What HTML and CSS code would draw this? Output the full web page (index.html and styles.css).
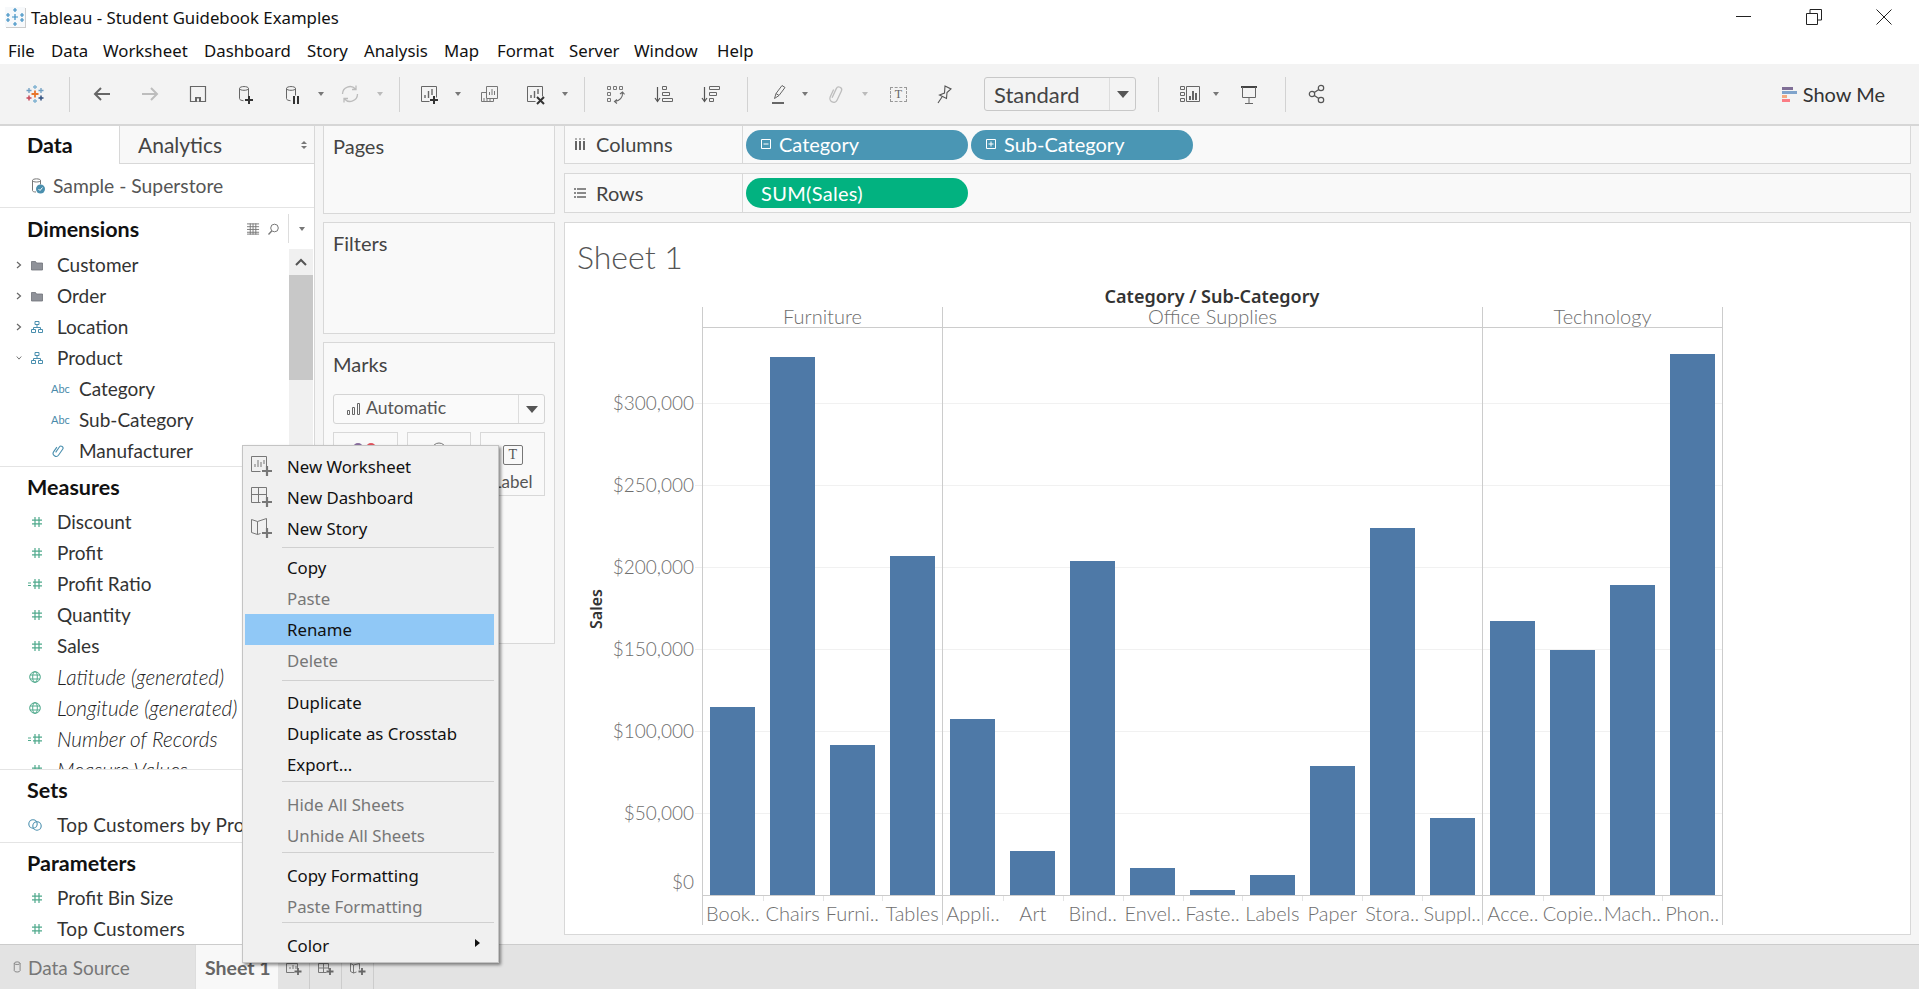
FILE: index.html
```html
<!DOCTYPE html>
<html lang="en">
<head>
<meta charset="utf-8">
<title>Tableau - Student Guidebook Examples</title>
<link rel="stylesheet" href="styles.css">
</head>
<body>
<svg class="defs" aria-hidden="true">
  <defs>
    <symbol id="cross-logo" viewBox="0 0 20 20">
      <path stroke-width="1.2" d="M10 7v6M7 10h6M10 1v4M8 3h4M10 15v4M8 17h4M3 6v4M1 8h4M17 6v4M15 8h4M3 11v4M1 13h4M17 11v4M15 13h4"/>
    </symbol>
    <symbol id="i-folder" viewBox="0 0 12 12"><path fill="#8f9299" stroke="#6f7278" stroke-width=".8" d="M.5 2.500h4l1 1.500h6v7H.5z"/></symbol>
    <symbol id="i-hier" viewBox="0 0 12 12"><path fill="none" stroke="#4a8fae" d="M4 .5h4v3H4zM.5 8.500h4v3h-4zM7.500 8.500h4v3h-4zM6 3.500v3M2.500 8.500v-2h7v2"/></symbol>
    <symbol id="i-chev-r" viewBox="0 0 6 8"><path fill="none" stroke="#666" stroke-width="1.200" d="M1 1l3.500 3L1 7"/></symbol>
    <symbol id="i-chev-d" viewBox="0 0 8 6"><path fill="none" stroke="#666" stroke-width="1.200" d="M1 1l3 3.500L7 1"/></symbol>
    <symbol id="i-clip" viewBox="0 0 14 14"><path fill="none" stroke="#4a8fae" stroke-width="1.100" transform="rotate(35 7 7)" d="M5 10V3.500a2 2 0 0 1 4 0V10.500a3 3 0 0 1-6 0V5"/></symbol>
    <symbol id="i-hash" viewBox="0 0 14 12"><path fill="none" stroke="#4fa98c" stroke-width="1.200" d="M7 1v10M11 1v10M4 4.200h10M4 7.800h10"/></symbol>
    <symbol id="i-calc" viewBox="0 0 14 12"><path fill="none" stroke="#4fa98c" stroke-width="1.200" d="M7 1v10M11 1v10M5 4.200h9M5 7.800h9M0 5h3M0 7.500h3"/></symbol>
    <symbol id="i-globe" viewBox="0 0 12 12"><g fill="none" stroke="#4fa98c"><circle cx="6" cy="6" r="5.300"/><ellipse cx="6" cy="6" rx="2.300" ry="5.300"/><path d="M1 4h10M1 8h10"/></g></symbol>
    <symbol id="i-venn" viewBox="0 0 14 12"><g fill="none" stroke="#4a8fae" stroke-width="1.100"><circle cx="5" cy="5" r="4.200"/><circle cx="9" cy="7" r="4.200"/></g></symbol>
    <symbol id="i-cyl" viewBox="0 0 12 14"><path fill="none" stroke="#777" d="M1.500 2.500c0-2.200 7-2.200 7 0v9c0 2-7 2-7 0zM1.500 2.500c0 2 7 2 7 0"/></symbol>
    <symbol id="t-back" viewBox="0 0 22 22"><path fill="none" stroke="#666" stroke-width="2" d="M19 11H4M10 5l-6 6 6 6"/></symbol>
    <symbol id="t-fwd" viewBox="0 0 22 22"><path fill="none" stroke="#bdbdbd" stroke-width="2" d="M3 11h15M12 5l6 6-6 6"/></symbol>
    <symbol id="t-save" viewBox="0 0 22 22"><path fill="none" stroke="#666" stroke-width="1.200" d="M3.500 3.500h15v15h-15z"/><path fill="#666" d="M8 14h6v4.500H8z"/><path fill="#f3f3f3" d="M10 15.500h2v3h-2z"/></symbol>
    <symbol id="t-ds" viewBox="0 0 22 22"><path fill="none" stroke="#666" d="M5.500 5.500c0-2.600 9-2.600 9 0v8M5.500 5.500c0 2.400 9 2.400 9 0M5.500 5.500v10c0 1.500 2 2 4 2.200"/><path fill="none" stroke="#333" stroke-width="2" d="M15 13v8M11 17h8"/></symbol>
    <symbol id="t-pause" viewBox="0 0 22 22"><path fill="none" stroke="#666" d="M5.500 5.500c0-2.600 9-2.600 9 0v7M5.500 5.500c0 2.400 9 2.400 9 0M5.500 5.500v10c0 1.500 2 2 4 2.200"/><path fill="none" stroke="#333" stroke-width="2" d="M13 13v8M17 13v8"/></symbol>
    <symbol id="t-refresh" viewBox="0 0 22 22"><path fill="none" stroke="#bcbcbc" stroke-width="1.300" d="M3.500 11A7.500 7.500 0 0 1 16.500 6M18.500 11A7.500 7.500 0 0 1 5.500 16M17 2.500v4h-4M5 19.500v-4h4"/></symbol>
    <symbol id="t-new" viewBox="0 0 22 22"><path fill="none" stroke="#666" d="M3.500 3.500h15v11M3.500 3.500v15h8"/><path fill="none" stroke="#666" stroke-width="1.400" d="M7 15v-3M10.500 15V8M14 12V6"/><path fill="none" stroke="#333" stroke-width="2" d="M16 13v8M12 17h8"/></symbol>
    <symbol id="t-dup" viewBox="0 0 22 22"><path fill="none" stroke="#777" d="M8.500 3.500h11v12h-11zM3.500 9.500h5M3.500 9.500v9h12v-3"/><path fill="none" stroke="#777" d="M11.500 12V9M14 12V6M16.500 12V8M6 18v-3M9 18v-2M12 18v-3"/></symbol>
    <symbol id="t-clear" viewBox="0 0 22 22"><path fill="none" stroke="#666" d="M3.500 3.500h15v10M3.500 3.500v15h8"/><path fill="none" stroke="#666" stroke-width="1.400" d="M7 15v-3M10.500 15V8M14 11V6"/><path fill="none" stroke="#333" stroke-width="2" d="M13 14l7 7M20 14l-7 7"/></symbol>
    <symbol id="t-swap" viewBox="0 0 22 22"><path fill="none" stroke="#777" d="M3.500 3.500h3v3h-3zM9.500 3.500h3v3h-3zM15.500 3.500h3v3h-3zM3.500 9.500h3v3h-3zM3.500 15.500h3v3h-3z"/><path fill="none" stroke="#666" stroke-width="1.100" d="M18.500 9.500c.5 5-3 8.500-7.500 9M16 11l2.500-2 2 2.300M13 16.500l-2.500 2 2.500 2"/></symbol>
    <symbol id="t-asc" viewBox="0 0 22 22"><path fill="none" stroke="#555" stroke-width="1.200" d="M4.500 4v14M2 15l2.500 3.500L7 15"/><path fill="none" stroke="#666" d="M9.500 3.500h4v3h-4zM9.500 9.500h7v3h-7zM9.500 15.500h10v3h-10z"/></symbol>
    <symbol id="t-desc" viewBox="0 0 22 22"><path fill="none" stroke="#555" stroke-width="1.200" d="M4.500 4v14M2 15l2.500 3.500L7 15"/><path fill="none" stroke="#666" d="M9.500 3.500h10v3h-10zM9.500 9.500h7v3h-7zM9.500 15.500h4v3h-4z"/></symbol>
    <symbol id="t-pen" viewBox="0 0 22 22"><path fill="none" stroke="#666" d="M6.500 15.500l1.500-5 6-8 3 2-6 8zM8 10.500l3 2"/><path stroke="#666" stroke-width="2" d="M4 20h12"/></symbol>
    <symbol id="t-clip" viewBox="0 0 22 22"><path fill="none" stroke="#bdbdbd" stroke-width="1.300" transform="rotate(25 11 11)" d="M9 16V6a2.800 2.800 0 0 1 5.600 0v10a3.800 3.800 0 0 1-7.600 0V8"/></symbol>
    <symbol id="t-pin" viewBox="0 0 22 22"><path fill="none" stroke="#555" stroke-width="1.100" d="M12 3l6 3-4 3.500-.5 6-7-3.500 5-2zM9 14l-4 6"/></symbol>
    <symbol id="t-fit" viewBox="0 0 22 22"><path fill="none" stroke="#666" d="M1.500 3.500h4v3h-4zM1.500 9.500h4v3h-4zM1.500 15.500h4v3h-4zM7.500 3.500h13v15h-13z"/><path fill="none" stroke="#555" stroke-width="1.800" d="M11 17v-4M14 17V8M17 17v-7"/></symbol>
    <symbol id="t-present" viewBox="0 0 22 22"><path stroke="#444" stroke-width="2" d="M3 4h16"/><path fill="none" stroke="#666" d="M4.500 4v10.500h13V4M11 14.500V20M7 20.500h8"/></symbol>
    <symbol id="t-share" viewBox="0 0 22 22"><g fill="none" stroke="#555" stroke-width="1.200"><circle cx="15" cy="5" r="2.700"/><circle cx="6" cy="11" r="2.700"/><circle cx="15" cy="17" r="2.700"/><path d="M12.800 6.500L8.300 9.500M8.300 12.500l4.500 3"/></g></symbol>
    <symbol id="m-sheet" viewBox="0 0 22 22"><path fill="none" stroke="#777" d="M.5 1.500h15v10M.5 1.500v15h9"/><path fill="none" stroke="#777" d="M4 12V9M7 12V5M10 12V7M13 9V5"/><path stroke="#777" stroke-width="2.200" fill="none" d="M16 11v10M11 16h10"/></symbol>
    <symbol id="m-dash" viewBox="0 0 22 22"><path fill="none" stroke="#777" d="M.5 1.500h15v10M.5 1.500v15h9M.5 8.500h15M7.500 1.500v15"/><path stroke="#777" stroke-width="2.200" fill="none" d="M16 11v10M11 16h10"/></symbol>
    <symbol id="m-story" viewBox="0 0 22 22"><path fill="none" stroke="#777" d="M.5 2.500l6 2 9-3v10M.5 2.500v13l6 2 3-1M6.500 4.500v13"/><path stroke="#777" stroke-width="2.200" fill="none" d="M16 11v10M11 16h10"/></symbol>
    <symbol id="b-sheet" viewBox="0 0 16 12"><path fill="none" stroke="#777" d="M.5 .5v9h8M.5 .5h11v6M4 6V4M7 6V2M10 6V3"/><path stroke="#666" stroke-width="1.800" fill="none" d="M12 5v7M8.500 8.500H15.500"/></symbol>
    <symbol id="b-dash" viewBox="0 0 16 12"><path fill="none" stroke="#777" d="M.5 .5v9h8M.5 .5h10v6M.5 5h10M5.500 .5v9"/><path stroke="#666" stroke-width="1.800" fill="none" d="M12 5v7M8.500 8.500H15.500"/></symbol>
    <symbol id="b-story" viewBox="0 0 16 12"><path fill="none" stroke="#777" d="M.5 .5l3 1.500 6-1.500v6M.5 .5v8l3 1.500 3-1M3.500 2v8"/><path stroke="#666" stroke-width="1.800" fill="none" d="M12 5v7M8.500 8.500H15.500"/></symbol>
  </defs>
</svg>

<header class="titlebar">
  <svg class="app-icon"><use href="#cross-logo"/></svg>
  <span class="app-title">Tableau - Student Guidebook Examples</span>
  <div class="win-controls">
    <svg class="win-btn" viewBox="0 0 16 16"><path stroke="#222" d="M0 7.500h15"/></svg>
    <svg class="win-btn" viewBox="0 0 16 16"><path fill="none" stroke="#222" d="M.5 4.500h11v11H.5zM4 4V.5h11.500V11H12"/></svg>
    <svg class="win-btn" viewBox="0 0 16 16"><path stroke="#222" d="M.5 .5l15 15M15.500 .5l-15 15"/></svg>
  </div>
</header>

<nav class="menubar">
  <span class="mb-file">File</span><span class="mb-data">Data</span><span class="mb-ws">Worksheet</span><span class="mb-db">Dashboard</span><span class="mb-st">Story</span><span class="mb-an">Analysis</span><span class="mb-mp">Map</span><span class="mb-fm">Format</span><span class="mb-sv">Server</span><span class="mb-wn">Window</span><span>Help</span>
</nav>

<div class="toolbar">
  <svg class="tb-icon logo-color" viewBox="0 0 20 20">
    <path fill="none" stroke="#7fb2d2" stroke-width="1.300" d="M10 1v4M8 3h4M10 15v4M8 17h4"/>
    <path fill="none" stroke="#e8762c" stroke-width="1.800" d="M10 6.500v7M6.500 10h7"/>
    <path fill="none" stroke="#c8485a" stroke-width="1.500" d="M4 11.500v5M1.500 14h5"/>
    <path fill="none" stroke="#6f9ec2" stroke-width="1.300" d="M4 4v5M1.500 6.500h5"/>
    <path fill="none" stroke="#2f4f7f" stroke-width="1.500" d="M16 11.500v5M13.500 14h5"/>
    <path fill="none" stroke="#6f9ec2" stroke-width="1.300" d="M16 4v5M13.500 6.500h5"/>
  </svg>
  <i class="tb-sep"></i>
  <svg class="tb-icon"><use href="#t-back"/></svg>
  <svg class="tb-icon"><use href="#t-fwd"/></svg>
  <svg class="tb-icon"><use href="#t-save"/></svg>
  <svg class="tb-icon"><use href="#t-ds"/></svg>
  <svg class="tb-icon"><use href="#t-pause"/></svg>
  <i class="tb-caret"></i>
  <svg class="tb-icon"><use href="#t-refresh"/></svg>
  <i class="tb-caret off"></i>
  <i class="tb-sep"></i>
  <svg class="tb-icon"><use href="#t-new"/></svg>
  <i class="tb-caret"></i>
  <svg class="tb-icon"><use href="#t-dup"/></svg>
  <svg class="tb-icon"><use href="#t-clear"/></svg>
  <i class="tb-caret"></i>
  <i class="tb-sep"></i>
  <svg class="tb-icon"><use href="#t-swap"/></svg>
  <svg class="tb-icon"><use href="#t-asc"/></svg>
  <svg class="tb-icon"><use href="#t-desc"/></svg>
  <i class="tb-sep"></i>
  <svg class="tb-icon"><use href="#t-pen"/></svg>
  <i class="tb-caret"></i>
  <svg class="tb-icon"><use href="#t-clip"/></svg>
  <i class="tb-caret off"></i>
  <span class="tb-label">T</span>
  <svg class="tb-icon"><use href="#t-pin"/></svg>
  <div class="fit-combo"><span class="fit-text">Standard</span><span class="fit-arrow"><i class="big-caret"></i></span></div>
  <i class="tb-sep"></i>
  <svg class="tb-icon"><use href="#t-fit"/></svg>
  <i class="tb-caret"></i>
  <svg class="tb-icon"><use href="#t-present"/></svg>
  <i class="tb-sep"></i>
  <svg class="tb-icon"><use href="#t-share"/></svg>
  <div class="showme">
    <span class="sm-bars"><i class="sm1"></i><i class="sm2"></i><i class="sm3"></i><i class="sm4"></i></span>
    <span>Show Me</span>
  </div>
</div>

<main class="workspace">
  <aside class="data-pane">
    <div class="tabs">
      <div class="tab active">Data</div>
      <div class="tab other"><span>Analytics</span><span class="stepper"><i class="st-up"></i><i class="st-down"></i></span></div>
    </div>
    <div class="source"><svg class="src-icon" viewBox="0 0 14 16"><path fill="none" stroke="#777" d="M1.500 2.500c0-2.200 8-2.200 8 0v4M1.500 2.500c0 2 8 2 8 0M1.500 2.500v10c0 1 1.500 1.500 3.500 1.500"/><circle cx="9.500" cy="11" r="4.500" fill="#4a8fae"/><path fill="none" stroke="#fff" d="M7.500 11l1.500 1.500 2.500-3"/></svg><span>Sample - Superstore</span></div>

    <section class="sec sec-dim">
      <div class="sec-head dim-head">
        <h2>Dimensions</h2>
        <svg class="head-ic" viewBox="0 0 14 12"><path stroke="#777" d="M0 .5h13M0 3.500h13M0 6.500h13M0 9.500h13M0 11.500h13M3.500 0v12M6.500 0v12M9.500 0v12"/></svg>
        <svg class="head-ic search" viewBox="0 0 12 12"><circle cx="7" cy="5" r="3.800" fill="none" stroke="#777"/><path stroke="#777" stroke-width="1.300" d="M4.200 8L1 11.500"/></svg>
        <span class="head-menu"><i class="tb-caret"></i></span>
      </div>
      <div class="dim-body">
        <div class="list">
          <div class="row"><svg class="chev"><use href="#i-chev-r"/></svg><svg class="ic"><use href="#i-folder"/></svg><span>Customer</span></div>
          <div class="row"><svg class="chev"><use href="#i-chev-r"/></svg><svg class="ic"><use href="#i-folder"/></svg><span>Order</span></div>
          <div class="row"><svg class="chev"><use href="#i-chev-r"/></svg><svg class="ic"><use href="#i-hier"/></svg><span>Location</span></div>
          <div class="row"><svg class="chev"><use href="#i-chev-d"/></svg><svg class="ic"><use href="#i-hier"/></svg><span>Product</span></div>
          <div class="row nested"><span class="abc">Abc</span><span>Category</span></div>
          <div class="row nested"><span class="abc">Abc</span><span>Sub-Category</span></div>
          <div class="row nested"><span class="abc"><svg class="clip"><use href="#i-clip"/></svg></span><span>Manufacturer</span></div>
        </div>
        <div class="scrollbar"><div class="sb-up"><svg viewBox="0 0 12 8"><path fill="none" stroke="#555" stroke-width="2" d="M1 7l5-5 5 5"/></svg></div><div class="sb-thumb"></div></div>
      </div>
    </section>

    <section class="sec sec-mea">
      <div class="sec-head"><h2>Measures</h2></div>
      <div class="row leaf"><svg class="ic-m"><use href="#i-hash"/></svg><span>Discount</span></div>
      <div class="row leaf"><svg class="ic-m"><use href="#i-hash"/></svg><span>Profit</span></div>
      <div class="row leaf"><svg class="ic-m"><use href="#i-calc"/></svg><span>Profit Ratio</span></div>
      <div class="row leaf"><svg class="ic-m"><use href="#i-hash"/></svg><span>Quantity</span></div>
      <div class="row leaf"><svg class="ic-m"><use href="#i-hash"/></svg><span>Sales</span></div>
      <div class="row leaf gen"><svg class="ic-m"><use href="#i-globe"/></svg><span>Latitude (generated)</span></div>
      <div class="row leaf gen"><svg class="ic-m"><use href="#i-globe"/></svg><span>Longitude (generated)</span></div>
      <div class="row leaf gen"><svg class="ic-m"><use href="#i-calc"/></svg><span>Number of Records</span></div>
      <div class="row leaf gen"><svg class="ic-m"><use href="#i-hash"/></svg><span>Measure Values</span></div>
    </section>

    <section class="sec sec-set">
      <div class="sec-head"><h2>Sets</h2></div>
      <div class="row leaf wide"><svg class="ic-m"><use href="#i-venn"/></svg><span>Top Customers by Profit</span></div>
    </section>

    <section class="sec sec-par">
      <div class="sec-head"><h2>Parameters</h2></div>
      <div class="row leaf"><svg class="ic-m"><use href="#i-hash"/></svg><span>Profit Bin Size</span></div>
      <div class="row leaf wide"><svg class="ic-m"><use href="#i-hash"/></svg><span>Top Customers</span></div>
    </section>
  </aside>

  <div class="cards">
    <div class="card pages"><span class="card-title">Pages</span></div>
    <div class="card filters"><span class="card-title">Filters</span></div>
    <div class="card marks">
      <span class="card-title">Marks</span>
      <div class="mark-combo">
        <svg class="mark-bars" viewBox="0 0 14 12"><path fill="none" stroke="#666" d="M1.500 7.500h2v4h-2zM6.500 4.500h2v7h-2zM11.500 .5h2v11h-2z"/></svg>
        <span class="mark-text">Automatic</span>
        <span class="mark-arrow"><i class="big-caret"></i></span>
      </div>
      <div class="mark-btns">
        <div class="mark-btn"><svg class="mb-ic" viewBox="0 0 30 14"><circle cx="8" cy="8" r="5" fill="#8a6f9e"/><circle cx="21" cy="8" r="5" fill="#e0555f"/></svg><span>Color</span></div>
        <div class="mark-btn"><svg class="mb-ic" viewBox="0 0 30 14"><circle cx="15" cy="10" r="7" fill="none" stroke="#777"/></svg><span>Size</span></div>
        <div class="mark-btn"><span class="mb-t">T</span><span>Label</span></div>
      </div>
    </div>
  </div>

  <div class="stage">
    <div class="shelf s-col">
      <div class="shelf-label"><svg class="shelf-ic" viewBox="0 0 12 12"><path stroke="#666" stroke-width="2" d="M2 3v9M6 3v9M10 3v9"/><path stroke="#666" d="M1 1h2M5 1h2M9 1h2"/></svg><span>Columns</span></div>
      <div class="pill blue"><svg class="pill-ic" viewBox="0 0 10 10"><path fill="none" stroke="#fff" d="M.5 .5h9v9h-9zM2.500 5h5"/></svg><span>Category</span></div>
      <div class="pill blue"><svg class="pill-ic" viewBox="0 0 10 10"><path fill="none" stroke="#fff" d="M.5 .5h9v9h-9zM2.500 5h5M5 2.500v5"/></svg><span>Sub-Category</span></div>
    </div>
    <div class="shelf s-row">
      <div class="shelf-label"><svg class="shelf-ic" viewBox="0 0 12 12"><path stroke="#666" stroke-width="1.600" d="M3 2h9M3 6h9M3 10h9M0 2h2M0 6h2M0 10h2"/></svg><span>Rows</span></div>
      <div class="pill green"><span class="sum">SUM(Sales)</span></div>
    </div>
    <div class="view">
      <div class="sheet-title">Sheet 1</div>
      <div class="chart-title">Category / Sub-Category</div>
      <div class="chart">
        <div class="y-area">
          <div class="y-title"><span>Sales</span></div>
          <div class="y-ticks">
            <div class="y-tick">$300,000</div>
            <div class="y-tick">$250,000</div>
            <div class="y-tick">$200,000</div>
            <div class="y-tick">$150,000</div>
            <div class="y-tick">$100,000</div>
            <div class="y-tick">$50,000</div>
            <div class="y-zero">$0</div>
          </div>
        </div>
        <div class="facet f4">
          <div class="facet-head">Furniture</div>
          <div class="plot">
            <div class="slot"><div class="bar" style="height:188px"></div></div>
            <div class="slot"><div class="bar" style="height:538px"></div></div>
            <div class="slot"><div class="bar" style="height:150px"></div></div>
            <div class="slot"><div class="bar" style="height:339px"></div></div>
          </div>
          <div class="labels"><span>Book..</span><span>Chairs</span><span>Furni..</span><span>Tables</span></div>
        </div>
        <div class="facet f9">
          <div class="facet-head">Office Supplies</div>
          <div class="plot">
            <div class="slot"><div class="bar" style="height:176px"></div></div>
            <div class="slot"><div class="bar" style="height:44px"></div></div>
            <div class="slot"><div class="bar" style="height:334px"></div></div>
            <div class="slot"><div class="bar" style="height:27px"></div></div>
            <div class="slot"><div class="bar" style="height:5px"></div></div>
            <div class="slot"><div class="bar" style="height:20px"></div></div>
            <div class="slot"><div class="bar" style="height:129px"></div></div>
            <div class="slot"><div class="bar" style="height:367px"></div></div>
            <div class="slot"><div class="bar" style="height:77px"></div></div>
          </div>
          <div class="labels"><span>Appli..</span><span>Art</span><span>Bind..</span><span>Envel..</span><span>Faste..</span><span>Labels</span><span>Paper</span><span>Stora..</span><span>Suppl..</span></div>
        </div>
        <div class="facet f4 last">
          <div class="facet-head">Technology</div>
          <div class="plot">
            <div class="slot"><div class="bar" style="height:274px"></div></div>
            <div class="slot"><div class="bar" style="height:245px"></div></div>
            <div class="slot"><div class="bar" style="height:310px"></div></div>
            <div class="slot"><div class="bar" style="height:541px"></div></div>
          </div>
          <div class="labels"><span>Acce..</span><span>Copie..</span><span>Mach..</span><span>Phon..</span></div>
        </div>
      </div>
    </div>
  </div>
</main>

<footer class="sheetbar">
  <div class="ds-tab"><svg class="ds-ic"><use href="#i-cyl"/></svg><span>Data Source</span></div>
  <div class="sheet-tab">Sheet 1</div>
  <div class="new-tab"><svg class="nt-ic"><use href="#b-sheet"/></svg></div>
  <div class="new-tab"><svg class="nt-ic"><use href="#b-dash"/></svg></div>
  <div class="new-tab"><svg class="nt-ic"><use href="#b-story"/></svg></div>
</footer>
<div class="bottom-strip"></div>

<div class="ctx-menu">
  <div class="mi with-ic"><svg class="mi-ic"><use href="#m-sheet"/></svg><span>New Worksheet</span></div>
  <div class="mi with-ic"><svg class="mi-ic"><use href="#m-dash"/></svg><span>New Dashboard</span></div>
  <div class="mi with-ic"><svg class="mi-ic"><use href="#m-story"/></svg><span>New Story</span></div>
  <div class="msep s1"></div>
  <div class="mi">Copy</div>
  <div class="mi off">Paste</div>
  <div class="mi hot">Rename</div>
  <div class="mi off">Delete</div>
  <div class="msep s2"></div>
  <div class="mi">Duplicate</div>
  <div class="mi">Duplicate as Crosstab</div>
  <div class="mi">Export...</div>
  <div class="msep s3"></div>
  <div class="mi off">Hide All Sheets</div>
  <div class="mi off">Unhide All Sheets</div>
  <div class="msep s4"></div>
  <div class="mi">Copy Formatting</div>
  <div class="mi off">Paste Formatting</div>
  <div class="msep s4"></div>
  <div class="mi has-sub"><span>Color</span><i class="sub-arrow"></i></div>
</div>
</body>
</html>
```
FILE: styles.css
```css
* { box-sizing: border-box; }
html, body { margin: 0; height: 991px; overflow: hidden; }
body { background: #fff; color: #333; font-family: "Lato", "Liberation Sans", sans-serif; position: relative; width: 1919px; }
i { display: block; font-style: normal; }
h2 { margin: 0; font-size: 21.5px; font-weight: 700; color: #111; }
.defs { width: 0; height: 0; position: absolute; }

/* window chrome */
.titlebar { height: 34px; display: flex; align-items: center; font-family: "Noto Sans", sans-serif; font-size: 16.8px; color: #111; padding-left: 5px; }
.app-icon { width: 20px; height: 20px; stroke: #3d8fc4; fill: none; background: #f7f9fb; box-shadow: 1px 1px 0 #ccc; margin-right: 6px; }
.win-controls { margin-left: auto; display: flex; }
.win-btn { width: 16px; height: 16px; margin-right: 54px; overflow: visible; }
.win-btn:last-child { margin-right: 27px; }

.menubar { height: 30px; display: flex; align-items: center; padding: 3px 0 0 8px; font-family: "Noto Sans", sans-serif; font-size: 16.8px; color: #111; }
.mb-file { width: 43px; }
.mb-data { width: 52px; }
.mb-ws { width: 101px; }
.mb-db { width: 103px; }
.mb-st { width: 57px; }
.mb-an { width: 80px; }
.mb-mp { width: 53px; }
.mb-fm { width: 72px; }
.mb-sv { width: 65px; }
.mb-wn { width: 83px; }

/* toolbar: columns run from one item's left edge to the next one's */
.toolbar {
  height: 62px; background: #f3f3f3; border-bottom: 2px solid #d6d6d6; padding: 0 34px 0 24px;
  display: grid; align-items: center; justify-items: start;
  grid-template-columns: 45px 22px 48px 48px 47px 47px 36px 22px 37px 23px 19px 36px 24px 46px 37px 23px 20px 49px 47px 47px 21px 33px 24px 36px 26px 46px 51px 174px 21px 33px 26px 47px 21px 1fr auto;
}
.tb-icon { width: 22px; height: 22px; }
.logo-color { height: 20px; width: 20px; margin-left: 1px; }
.tb-sep { width: 1px; height: 35px; background: #d2d2d2; }
.tb-caret { width: 0; height: 0; margin-left: 1px; border-left: 3px solid transparent; border-right: 3px solid transparent; border-top: 4px solid #777; }
.tb-caret.off { border-top-color: #bbb; }
.big-caret { width: 0; height: 0; border-left: 6px solid transparent; border-right: 6px solid transparent; border-top: 7px solid #555; }
.tb-label { width: 17px; height: 15px; margin-left: 3px; border: 1px dashed #999; font-family: "Liberation Serif", serif; font-size: 12px; line-height: 13px; text-align: center; color: #666; }
.fit-combo { width: 152px; height: 34px; border: 1px solid #c8c8c8; border-radius: 3px; display: flex; align-items: center; font-size: 22px; color: #444; }
.fit-text { flex: 1; padding-left: 9px; }
.fit-arrow { width: 26px; height: 100%; border-left: 1px solid #ddd; display: flex; align-items: center; justify-content: center; }
.showme { display: flex; align-items: center; font-size: 20px; color: #333; gap: 6px; }
.sm-bars { display: flex; flex-direction: column; gap: 1px; width: 15px; }
.sm-bars i { height: 3px; }
.sm1 { width: 11px; background: #7f6e96; }
.sm2 { width: 15px; background: #7fa3cb; }
.sm3 { width: 5px; background: #f4a97f; }
.sm4 { width: 8px; background: #fb7c84; }

/* workspace */
.workspace { height: 818px; display: flex; background: #f5f5f5; }
.data-pane { width: 315px; background: #fff; border-right: 1px solid #d8d8d8; display: flex; flex-direction: column; }
.tabs { height: 38px; display: flex; font-size: 21px; }
.tab { display: flex; align-items: center; }
.tab.active { width: 119px; padding-left: 27px; font-size: 21.5px; font-weight: 700; color: #111; }
.tab.other { flex: 1; background: #f8f8f8; border-left: 1px solid #d8d8d8; border-bottom: 1px solid #d8d8d8; padding-left: 18px; color: #444; justify-content: space-between; padding-right: 7px; }
.stepper { display: flex; flex-direction: column; gap: 2px; }
.st-up { border-left: 3px solid transparent; border-right: 3px solid transparent; border-bottom: 3px solid #777; }
.st-down { border-left: 3px solid transparent; border-right: 3px solid transparent; border-top: 3px solid #777; }
.source { height: 44px; display: flex; align-items: center; padding-left: 31px; border-bottom: 1px solid #e4e4e4; font-size: 19.3px; color: #555; gap: 8px; }
.src-icon { width: 14px; height: 16px; }

.sec { border-bottom: 1px solid #e4e4e4; overflow: hidden; flex: none; }
.sec-dim { height: 259px; }
.sec-mea { height: 303px; }
.sec-set { height: 73px; }
.sec-par { height: 101px; border-bottom: 0; }
.sec-head { height: 39px; display: flex; align-items: center; padding-left: 27px; }
.dim-head { height: 41px; padding-right: 0; }
.dim-head h2 { flex: 1; }
.head-ic { width: 13px; height: 12px; margin-right: 7px; }
.head-ic.search { margin-right: 8px; }
.head-menu { width: 26px; height: 29px; border-left: 1px solid #ddd; display: flex; align-items: center; justify-content: center; }
.dim-body { display: flex; height: 218px; }
.list { width: 289px; }
.row { height: 31px; display: flex; align-items: center; font-size: 19px; color: #333; white-space: nowrap; }
.chev { width: 6px; height: 8px; margin-left: 16px; margin-right: 9px; flex: none; }
.ic { width: 12px; height: 12px; margin-right: 14px; flex: none; }
.nested { padding-left: 51px; }
.abc { width: 28px; font-size: 11px; color: #4a8aaa; flex: none; }
.clip { width: 14px; height: 14px; margin-left: 1px; display: block; }
.leaf { padding-left: 28px; }
.wide { letter-spacing: .25px; }
.ic-m { width: 14px; height: 12px; margin-right: 15px; flex: none; }
.gen { font-style: italic; font-weight: 300; font-size: 20.7px; color: #222; }
.scrollbar { width: 24px; background: #f0f0f0; }
.sb-up { height: 26px; display: flex; align-items: center; justify-content: center; }
.sb-up svg { width: 12px; height: 8px; }
.sb-thumb { height: 105px; background: #c8c8c8; }

/* side cards */
.cards { width: 232px; margin-left: 8px; display: flex; flex-direction: column; gap: 8px; }
.card { background: #f9f9f9; border: 1px solid #d8d8d8; padding: 9px 10px 0 9px; font-size: 20px; color: #444; }
.card-title { display: block; line-height: 22px; }
.pages { height: 88px; border-top: 0; }
.filters { height: 112px; }
.marks { height: 302px; padding-top: 10px; }
.mark-combo { margin-top: 19px; height: 30px; border: 1px solid #d4d4d4; border-radius: 3px; display: flex; align-items: center; font-size: 17.6px; color: #555; padding: 0 0 0 12px; width: 212px; background: #fafafa; }
.mark-bars { width: 14px; height: 12px; margin-right: 6px; }
.mark-text { flex: 1; line-height: 24px; margin-bottom: 3px; }
.mark-arrow { width: 26px; height: 100%; border-left: 1px solid #ddd; display: flex; align-items: center; justify-content: center; }
.mark-btns { display: flex; gap: 9px; margin-top: 8px; width: 212px; }
.mark-btn { flex: 1; height: 64px; border: 1px solid #d8d8d8; display: flex; flex-direction: column; align-items: center; font-size: 17px; color: #555; }
.mb-ic { width: 30px; height: 14px; margin-top: 7px; margin-bottom: 12px; }
.mb-t { width: 20px; height: 20px; margin-top: 12px; margin-bottom: 6px; border: 1px solid #777; font-family: "Liberation Serif", serif; font-size: 14px; line-height: 18px; text-align: center; border-radius: 2px; }

/* shelves */
.stage { width: 1347px; margin-left: 9px; display: flex; flex-direction: column; }
.shelf { background: #f9f9f9; border: 1px solid #d8d8d8; border-top: 0; display: flex; align-items: center; gap: 3px; flex: none; }
.s-col { height: 38px; }
.s-row { height: 40px; border-top: 1px solid #d8d8d8; margin-top: 9px; }
.shelf-label { width: 178px; height: 100%; padding: 0 0 1px 9px; display: flex; align-items: center; gap: 10px; font-size: 20px; color: #444; border-right: 1px solid #d8d8d8; }
.shelf-ic { width: 12px; height: 12px; flex: none; }
.pill { width: 222px; height: 30px; border-radius: 15px; display: flex; align-items: center; color: #fff; font-size: 20px; padding: 0 0 1px 15px; gap: 8px; }
.pill.blue { background: #4a96b4; }
.pill.green { background: #02b280; }
.pill-ic { width: 10px; height: 10px; }
.sum { letter-spacing: .3px; }

/* view */
.view { height: 713px; margin-top: 9px; background: #fff; border: 1px solid #d8d8d8; flex: none; }
.sheet-title { height: 64px; padding: 2px 0 0 12px; line-height: 64px; font-size: 32px; font-weight: 300; color: #555; }
.chart-title { height: 20px; width: 1294px; text-align: center; line-height: 19px; font-family: "Noto Sans", sans-serif; font-size: 18px; font-weight: 600; color: #333; }
.chart { display: flex; font-weight: 300; color: #6e6e6e; font-size: 20px; }
.y-area { width: 137px; display: flex; }
.y-title { width: 20px; margin-left: 21px; height: 588px; padding-top: 15px; display: flex; align-items: center; justify-content: center; }
.y-title span { writing-mode: vertical-rl; transform: rotate(180deg); font-family: "Noto Sans", sans-serif; font-weight: 600; font-size: 16px; color: #333; }
.y-ticks { width: 96px; padding-top: 56px; text-align: right; font-size: 19px; }
.y-tick { height: 82px; line-height: 80px; padding-right: 8px; background: linear-gradient(#eee, #eee) right 40px / 7px 1px no-repeat; }
.y-zero { height: 39px; padding-right: 8px; line-height: 54px; }
.facet { border-left: 1px solid #ccc; flex: none; }
.f4 { width: 240px; }
.f9 { width: 540px; }
.facet.last { width: 241px; border-right: 1px solid #ccc; }
.facet-head { height: 21px; border-bottom: 1px solid #ccc; text-align: center; line-height: 19px; white-space: nowrap; }
.plot { height: 568px; display: flex; border-bottom: 1px solid #ccc; background: repeating-linear-gradient(to top, transparent 0 81px, #f1f1f1 81px 82px); }
.slot { flex: 1; display: flex; justify-content: center; align-items: flex-end; }
.bar { width: 45px; background: #4e79a7; flex: none; }
.labels { height: 29px; display: flex; }
.labels span { flex: 1 1 0; min-width: 0; text-align: center; line-height: 35px; white-space: nowrap; background: linear-gradient(#e4e4e4, #e4e4e4) left top / 1px 5px no-repeat; }
.labels span:first-child { background: none; }

/* sheet tabs */
.sheetbar { height: 45px; background: #e3e3e3; border-top: 1px solid #ccc; display: flex; align-items: stretch; font-size: 19px; }
.ds-tab { width: 196px; display: flex; align-items: center; padding-left: 13px; gap: 5px; color: #777; border-right: 1px solid #ddd; }
.ds-ic { width: 10px; height: 12px; }
.sheet-tab { width: 82px; background: #f8f8f8; padding-left: 9px; display: flex; align-items: center; font-size: 19.5px; font-weight: 700; color: #666; }
.new-tab { width: 32px; border-right: 1px solid #ccc; display: flex; justify-content: center; padding-top: 18px; }
.nt-ic { width: 16px; height: 12px; }
.bottom-strip { height: 2px; background: #fff; }

/* context menu */
.ctx-menu { position: absolute; left: 242px; top: 445px; width: 257px; height: 518px; background: #f0f0f0; border: 1px solid #c4c4c4; box-shadow: 2px 2px 3px rgba(0,0,0,.45); padding: 4px 4px 0 2px; font-family: "Noto Sans", sans-serif; font-size: 16.8px; color: #111; }
.mi { height: 31px; padding: 1px 0 0 42px; display: flex; align-items: center; white-space: nowrap; }
.mi.with-ic { padding-left: 6px; }
.mi-ic { width: 22px; height: 22px; margin-right: 14px; flex: none; }
.mi.off { color: #777; }
.mi.hot { background: #90c8f6; }
.mi.has-sub { justify-content: space-between; padding-right: 14px; }
.sub-arrow { width: 0; height: 0; border-top: 4px solid transparent; border-bottom: 4px solid transparent; border-left: 5px solid #111; margin-top: -6px; }
.msep { margin-left: 37px; background: linear-gradient(#d0d0d0, #d0d0d0) left 4px / 100% 1px no-repeat; height: 8.5px; }
.msep.s2 { height: 10.5px; }
.msep.s3 { height: 9.5px; background-position: left 2px; }
.msep.s4 { background-position: left 1px; }
```
